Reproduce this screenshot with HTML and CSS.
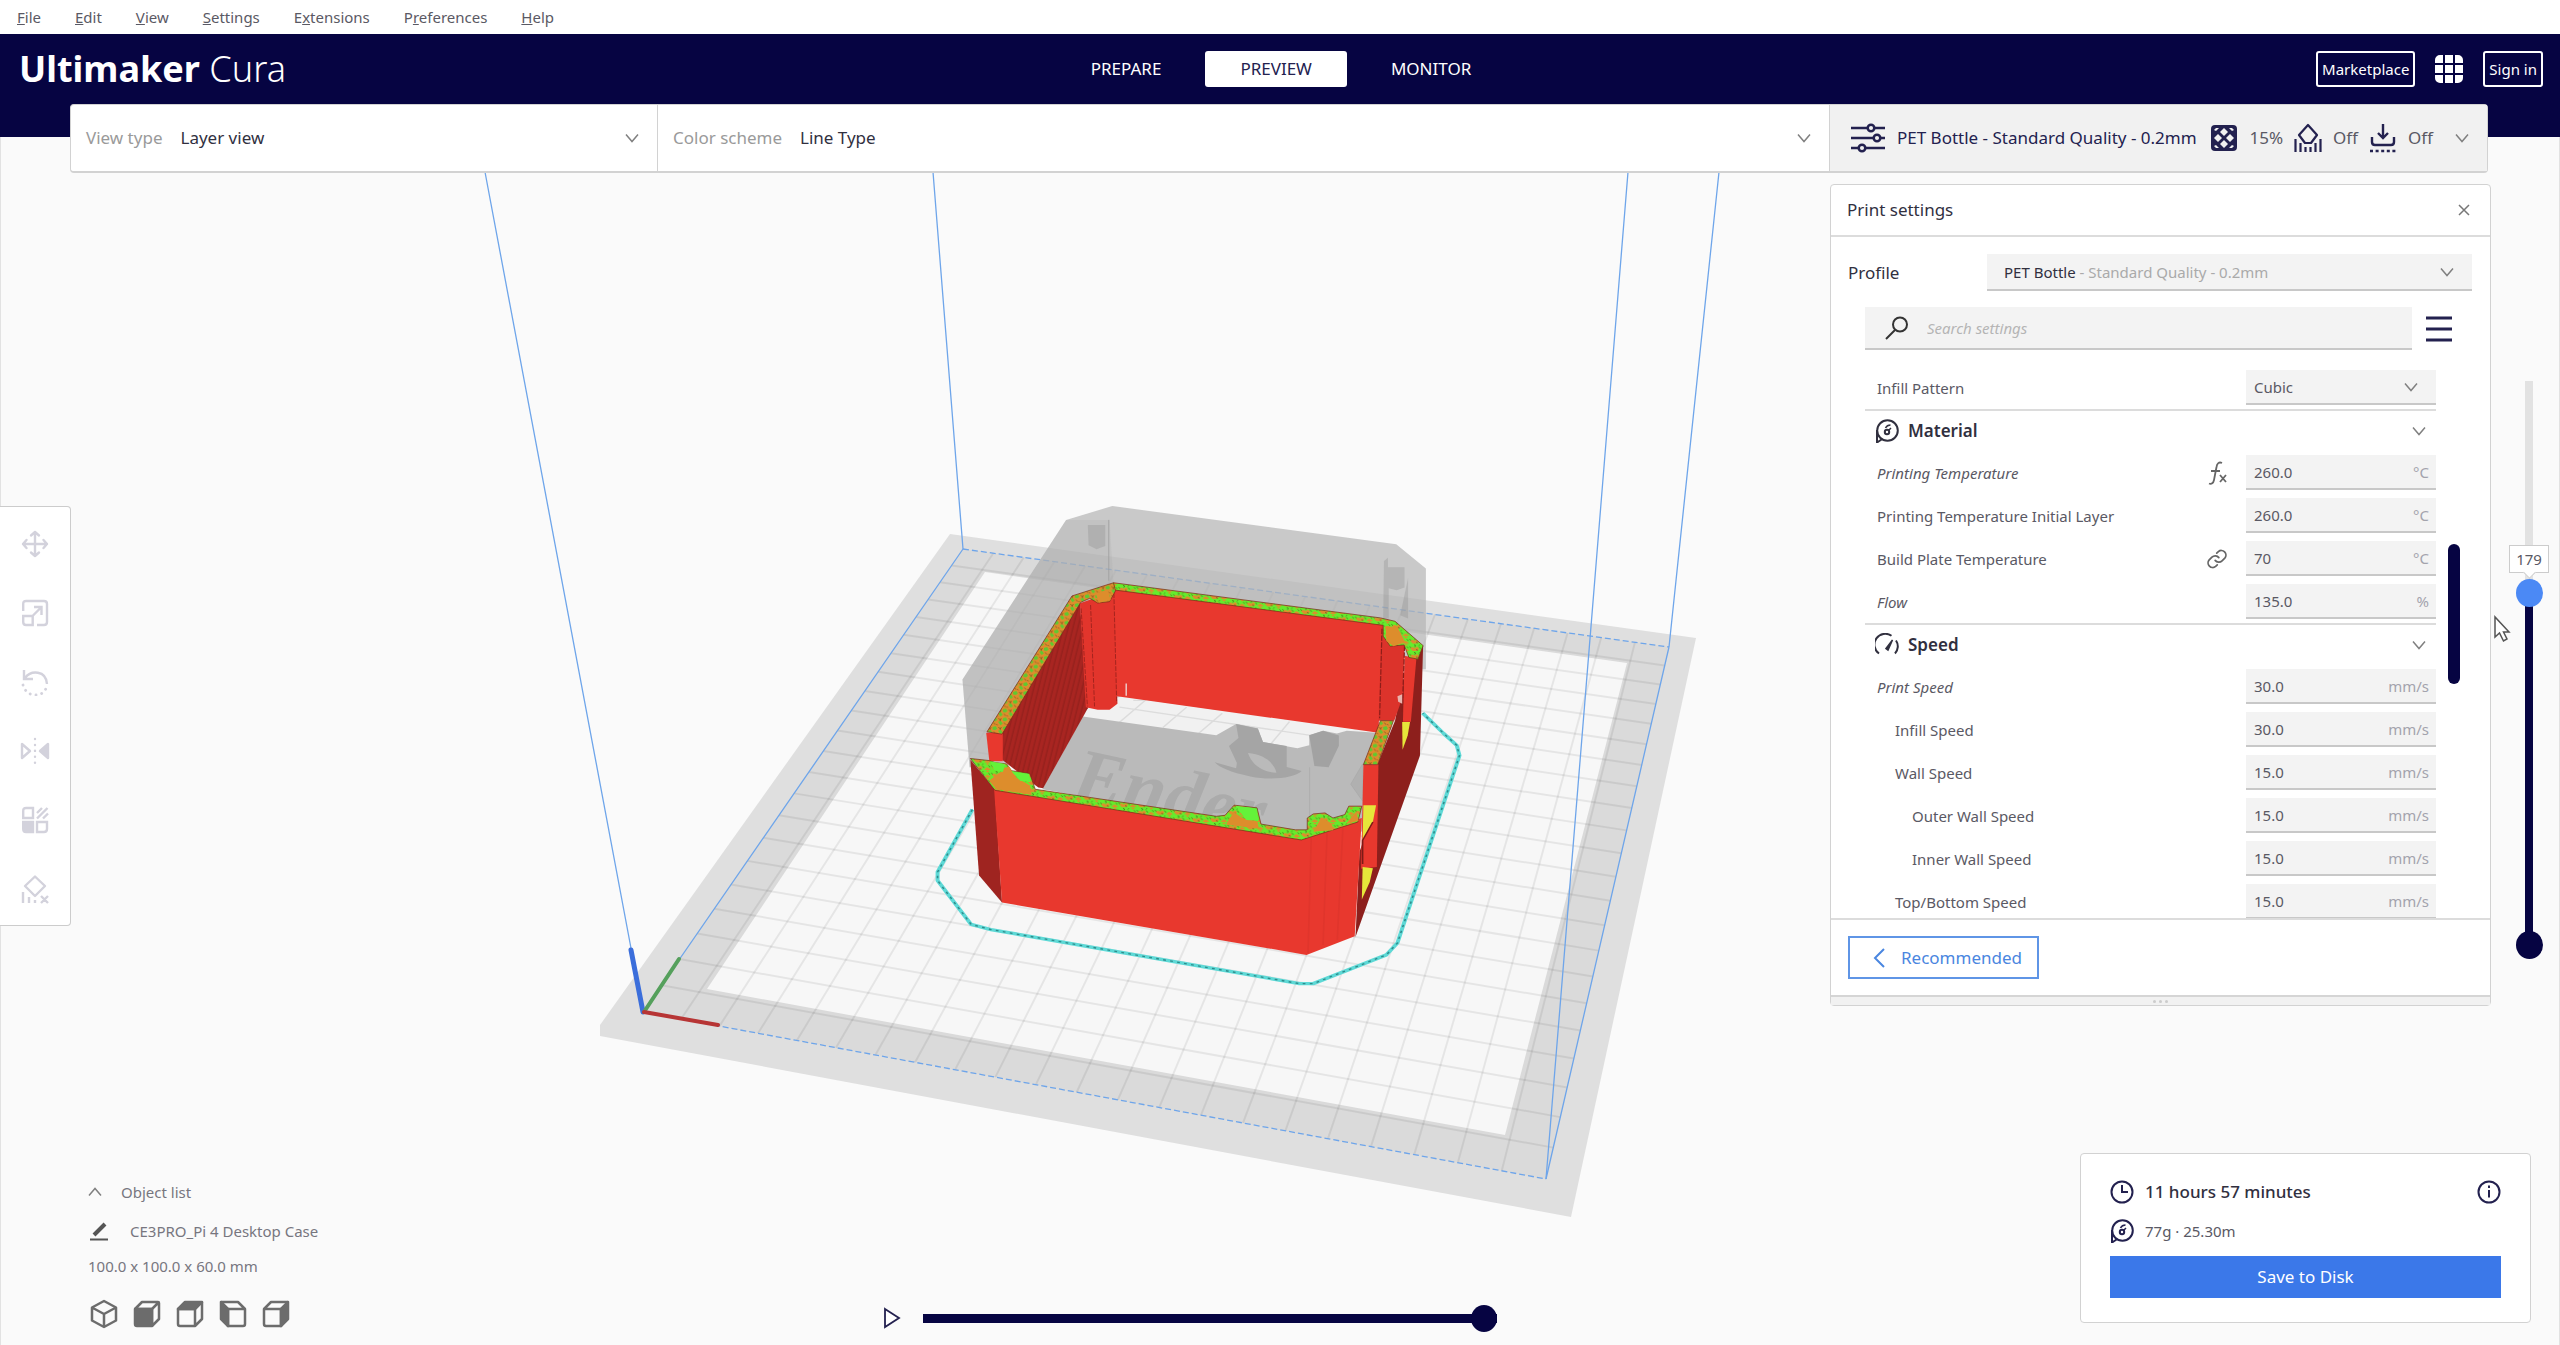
FILE: index.html
```html
<!DOCTYPE html>
<html lang="en">
<head>
    <meta charset="UTF-8">
    <meta name="viewport" content="width=device-width, initial-scale=1.0">
    <title>Ultimaker Cura</title>
    <link rel="stylesheet" href="styles.css">
</head>
<body>
    <!-- shared icons -->
    <svg class="defs" width="0" height="0">
        <symbol id="i-down" viewBox="0 0 14 14"><path d="M1 3.500l6 7 6-7" fill="none" stroke="currentColor" stroke-width="1.500"/></symbol>
        <symbol id="i-spool" viewBox="0 0 24 24">
            <g fill="none" stroke="currentColor">
                <circle cx="12.500" cy="11.500" r="10.300" stroke-width="2"/>
                <circle cx="12" cy="13" r="2.200" stroke-width="2"/>
                <path d="M2 11v12.500l4.500-3" stroke-width="2"/>
                <path d="M10.500 9q1.500-3 5-3M13.500 11.500l2.500-2.500" stroke-width="1.500"/>
            </g>
        </symbol>
    </svg>

    <nav class="menubar">
        <a href="#"><u>F</u>ile</a>
        <a href="#"><u>E</u>dit</a>
        <a href="#"><u>V</u>iew</a>
        <a href="#"><u>S</u>ettings</a>
        <a href="#">E<u>x</u>tensions</a>
        <a href="#">P<u>r</u>eferences</a>
        <a href="#"><u>H</u>elp</a>
    </nav>

    <header class="header">
        <div class="header-row">
            <div class="logo"><b>Ultimaker</b> <span>Cura</span></div>
            <div class="tabs">
                <button class="tab">PREPARE</button>
                <button class="tab active">PREVIEW</button>
                <button class="tab">MONITOR</button>
            </div>
            <div class="account">
                <button class="outline-btn">Marketplace</button>
                <button class="icon-btn" aria-label="Applications">
                    <svg width="28" height="28" viewBox="0 0 28 28" fill="#fff">
                        <path d="M5 0h3v8H0V5a5 5 0 0 1 5-5zM10 0h8v8h-8zM20 0h3a5 5 0 0 1 5 5v3h-8zM0 10h8v8H0zM10 10h8v8h-8zM20 10h8v8h-8zM0 20h8v8H5a5 5 0 0 1-5-5zM10 20h8v8h-8zM20 20h8v3a5 5 0 0 1-5 5h-3z"/>
                    </svg>
                </button>
                <button class="outline-btn">Sign in</button>
            </div>
        </div>
    </header>

    <main class="workspace">
        <svg class="scene" viewBox="0 137 2560 1208" preserveAspectRatio="xMidYMid slice">
            <defs>
                <pattern id="infill" width="46" height="22" patternUnits="userSpaceOnUse">
                    <rect width="46" height="22" fill="#64ec2c"/>
                    <path d="M2 14l7-4 5 4 6-5 5 7-4 5-12 1zM30 20l6-6 6 3 4 5H30zM33 4l5-3 4 4-5 2z" fill="#dd8d2c"/>
                    <path d="M1 8l3 5M12 3l5 4-4 2M25 10l4 6M27 3l-3 4M40 9l4 5M17 18l5 2" stroke="#4a6a1c" stroke-width="2" fill="none"/>
                </pattern>
                <pattern id="infill-dense" width="26" height="26" patternUnits="userSpaceOnUse">
                    <rect width="26" height="26" fill="#dd8d2c"/>
                    <path d="M0 3l8-3 4 7-5 5-7-2zM14 14l7-3 5 8-6 5z" fill="#5fc92f"/>
                    <path d="M3 16l4 6M15 4l5 4M22 3l-3 8M10 20l3 4" stroke="#75501c" stroke-width="2"/>
                </pattern>
                <pattern id="layers" width="12" height="30" patternUnits="userSpaceOnUse" patternTransform="rotate(12)">
                    <rect width="12" height="30" fill="#a92521"/>
                    <path d="M3 0v30" stroke="#97211d" stroke-width="4"/>
                </pattern>
            </defs>

            <!-- build plate, then the usable area -->
            <path d="M950 534L1696 638 1571 1217 600 1036V1025z" fill="#dfdfdf"/>
            <path d="M963 549L1669 647 1546 1179 643 1012z" fill="#dadada"/>
            <path d="M985 572L1627 663 1505 1135 707 989z" fill="#f7f7f7"/>
            <g id="grid" stroke="#000" stroke-opacity=".07" stroke-width="2"></g>

            <!-- build volume -->
            <g fill="none" stroke="#6ea5ea" stroke-width="1.300">
                <path d="M485 172L643 1012M933 172L963 549M1628 172L1546 1179M1719 172L1669 647"/>
                <path d="M643 1012L963 549M1669 647L1546 1179"/>
                <path d="M963 549L1669 647M643 1012L1546 1179" stroke-dasharray="6 3"/>
            </g>

            <!-- model -->
            <g transform="translate(900 480) scale(.3954 .338)">
                <path d="M420 118L537 77 1255 190 1330 262V560H1200L230 850H176L158 590z" fill="#b4b4b4" fill-opacity=".7"/>
                <path d="M420 118L158 590 176 850H230L540 310 530 118z" fill="#999" fill-opacity=".14"/>
                <path d="M475 133h44v62l-22 10-20-12zM1224 240l10-10v28h42v60l-20 8-20-6v90h-14z" fill="#888" fill-opacity=".3"/>
                <path d="M528 118v180" stroke="#999" stroke-width="2"/>
                <path d="M1265 400l20-110v120z" fill="#888" fill-opacity=".3"/>

                <!-- floor -->
                <path d="M465 680L560 640 1205 748 1170 1030 360 915z" fill="#f1f1f1"/>
                <path d="M555 672L1150 775M590 652l30 0-70 70M725 672l-60 60M815 690l-60 60M985 715l-50 70" stroke="#dcdcdc" stroke-width="4" fill="none"/>
                <path d="M462 700L800 755 850 722 905 735 918 775 1005 794 1035 785V755L1070 742 1105 750 1130 742 1205 748 1170 1040 1000 1045 360 915z" fill="#bababa"/>
                <path d="M850 722l55 13 13 40 60 12v62l38 12c-20 22-80 28-130 16-50-12-80-28-90-42l54 18 2-16-20-50 24-24z" fill="#a5a5a5"/>
                <path d="M880 808c40 4 66 28 72 58-34-2-62-22-72-58z" fill="#bababa"/>
                <path d="M1035 755l35-13 40 14v30l-26 64-36-4z" fill="#a2a2a2"/>
                <path d="M1036 850v150M1140 900l30-60v110z" stroke="#a8a8a8" stroke-width="2" fill="#b0b0b0"/>
            </g>
            <text class="emboss" transform="translate(1070 798) rotate(12)">Ender</text>
            <g transform="translate(900 480) scale(.3954 .338)">
                <!-- inner walls -->
                <path d="M535 320L1222 425 1210 748 540 638z" fill="#e8382e"/>
                <path d="M455 360L255 750V825L350 910 362 912 475 675z" fill="url(#layers)"/>
                <path d="M455 365L540 330 550 662 530 680 500 680 470 672z" fill="#e2352c"/>
                <path d="M458 380l16 290M482 370l10 300M541 335l7 325" stroke="#8d1d19" stroke-width="2" stroke-dasharray="14 4" fill="none"/>
                <path d="M572 602v36" stroke="#eee" stroke-width="3"/>
                <path d="M1285 520L1323 490 1315 815 1152 1352 1162 1100 1205 960 1208 840 1252 712z" fill="#8d1f1c"/>
                <path d="M1218 430L1276 485 1272 640 1250 712H1210z" fill="#dc332b"/>
                <path d="M1276 520L1306 528 1292 715H1272z" fill="#e8382e"/>
                <path d="M1219 440l-6 265M1276 490l-6 200" stroke="#8d1d19" stroke-width="3" stroke-dasharray="16 4" fill="none"/>
                <path d="M1258 640l12-6v28l-10-6z" fill="#e9b4ae"/>
                <path d="M1270 716h20l-6 40-13 42z" fill="#e6e63a"/>
                <path d="M1172 842H1210L1206 1145 1166 1150z" fill="#e8382e"/>
                <path d="M218 748H260V832H226z" fill="#e8382e"/>

                <!-- outer walls -->
                <path d="M178 828L240 915 258 1250 200 1170z" fill="#9f2420"/>
                <path d="M238 915L1015 1060 1168 1000 1150 1350 1028 1405 258 1250z" fill="#e8382e"/>
                <path d="M1040 1060l-8 340M1080 1045l-10 330M1120 1030l-14 330" stroke="#e0352c" stroke-width="4"/>
                <path d="M1172 962h32l-8 50-26 54z" fill="#e6e63a"/>
                <path d="M1170 1145l26 4-8 40-20 52z" fill="#e6e63a"/>
                <path d="M1196 1012l-26 54 0 70" stroke="#7d1a17" stroke-width="4" fill="none"/>

                <!-- current layer -->
                <g stroke="#7c2a18" stroke-width="2">
                    <path d="M540 304L1215 408 1252 418 1323 490 1310 530 1287 525 1275 488 1240 492 1222 462V430L540 325z" fill="url(#infill)"/>
                    <path d="M540 304L435 343 220 745 258 752 457 362 480 350 500 364 530 360 545 328z" fill="url(#infill-dense)"/>
                    <path d="M1215 712H1248L1208 842H1172z" fill="url(#infill-dense)"/>
                    <path d="M178 824L225 830 240 836 270 840 282 860 328 868 342 915 800 995 822 992 845 962 903 970 913 1018 1000 1035 1030 1035V1000L1045 988 1075 985 1095 1000 1125 990 1135 965 1168 965 1158 1012 1015 1065 240 918z" fill="url(#infill)"/>
                </g>
                <path d="M225 890l50-44 18 34 36 24 4 28-90-18zM826 1016l18-34 22 18 38 10 4 22-82-12zM1046 1040l20-42 26 18 4 20zM1128 1018l26-38 6 28z" fill="#dd8d2c"/>
                <path d="M1228 432l30 4 20 44-30 12-18-16z" fill="#dd8d2c"/>
                <path d="M495 335l30-10 8 30-30 8z" fill="#dd8d2c"/>
                <path d="M848 964l54 8 4 36-30-2zM282 862l44 8 4 24-26-4zM228 832l38 8-6 24-22-6z" fill="#64f23a"/>

                <!-- skirt -->
                <g fill="none" stroke-linejoin="round">
                    <path d="M183 975L95 1160V1185L180 1315 230 1330 1010 1490H1045L1230 1405 1258 1370 1415 815 1408 785 1375 750 1322 690" stroke="#5ed9d6" stroke-width="10"/>
                    <path d="M183 975L95 1160V1185L180 1315 230 1330 1010 1490H1045L1230 1405 1258 1370 1415 815 1408 785 1375 750 1322 690" stroke="#2f8c8c" stroke-width="4" stroke-dasharray="7 11"/>
                </g>
            </g>

            <!-- axes -->
            <g stroke-width="5" stroke-linecap="round">
                <path d="M643 1012L631 950" stroke="#3b6edb"/>
                <path d="M644 1012L679 959" stroke="#55a05c" stroke-width="4"/>
                <path d="M644 1012L718 1025" stroke="#b73535" stroke-width="4"/>
            </g>
        </svg>

        <section class="stage-bar">
            <div class="stage-select view-type">
                <label for="view-type">View type</label>
                <select id="view-type"><option>Layer view</option></select>
                <svg class="chev" width="14" height="14"><use href="#i-down"/></svg>
            </div>
            <div class="stage-select color-scheme">
                <label for="color-scheme">Color scheme</label>
                <select id="color-scheme"><option>Line Type</option></select>
                <svg class="chev" width="14" height="14"><use href="#i-down"/></svg>
            </div>
            <button class="print-setup">
                <svg width="36" height="30" viewBox="0 0 36 30" fill="none" stroke="currentColor" stroke-width="2.500">
                    <path d="M1 5h16M25 5h10M1 15h22M31 15h4M1 25h7M16 25h19"/>
                    <circle cx="21" cy="5" r="3.300"/><circle cx="27" cy="15" r="3.300"/><circle cx="12" cy="25" r="3.300"/>
                </svg>
                <span class="setup-name">PET Bottle - Standard Quality - 0.2mm</span>
                <svg width="28" height="28" viewBox="0 0 28 28">
                    <rect x="1" y="1" width="26" height="26" rx="4" fill="currentColor"/>
                    <path d="M14 4l4 4-4 4-4-4zM14 16l4 4-4 4-4-4zM8 10l4 4-4 4-4-4zM20 10l4 4-4 4-4-4zM6 4h3L6 7 4 6zM22 4h-3l3 3 2-1zM6 24h3l-3-3-2 1zM22 24h-3l3-3 2 1z" fill="#f1f1f1"/>
                </svg>
                <span class="setup-value">15%</span>
                <svg width="28" height="30" viewBox="0 0 28 30" fill="none" stroke="currentColor" stroke-width="2.200">
                    <path d="M14 2l9 10-6 8h-6l-6-8z" stroke-linejoin="round"/>
                    <path d="M1.500 16v13M6.500 20v9M11.500 24v5M16.500 24v5M21.500 20v9M26.500 16v13"/>
                </svg>
                <span class="setup-value">Off</span>
                <svg width="28" height="30" viewBox="0 0 28 30" fill="none" stroke="currentColor" stroke-width="2.400">
                    <path d="M14 1v14M9 10l5 5 5-5M3 14v5q0 3 3 3h16q3 0 3-3v-5"/>
                    <path d="M1 28h26" stroke-dasharray="3 2.600"/>
                </svg>
                <span class="setup-value">Off</span>
                <svg class="chev" width="14" height="14"><use href="#i-down"/></svg>
            </button>
        </section>

        <div class="canvas-main">
            <aside class="toolbar">
                <button aria-label="Move">
                    <svg width="28" height="28" viewBox="0 0 28 28" fill="none" stroke="currentColor" stroke-width="2.400" stroke-linecap="round" stroke-linejoin="round"><path d="M14 2v24M2 14h24M10 5.500L14 2l4 3.500M10 22.500l4 3.500 4-3.500M5.500 10L2 14l3.500 4M22.500 10l3.500 4-3.500 4"/></svg>
                </button>
                <button aria-label="Scale">
                    <svg width="28" height="28" viewBox="0 0 28 28" fill="none" stroke="currentColor" stroke-width="2.400"><path d="M2.200 12V5q0-3 3-3H23q3 0 3 3v18q0 3-3 3h-7M2.200 17h9.500v9H5q-2.800 0-2.800-3zM12 16.500L20 8.500M13 8h7.500v8"/></svg>
                </button>
                <button aria-label="Rotate">
                    <svg width="28" height="28" viewBox="0 0 28 28" fill="none" stroke="currentColor" stroke-width="2.400"><path d="M3 2v9h9M4 10C10 2 25 2 26 16"/><path d="M2 17q3 10 13 10 8 0 11-9" stroke-width="2.800" stroke-linecap="round" stroke-dasharray=".1 5.800"/></svg>
                </button>
                <button aria-label="Mirror">
                    <svg width="30" height="28" viewBox="0 0 30 28" fill="none" stroke="currentColor" stroke-width="2.400" stroke-linejoin="round"><path d="M2 7v14l8-7z"/><path d="M28 7v14l-8-7z" fill="currentColor"/><path d="M15 2v26" stroke-linecap="round" stroke-dasharray=".1 5.800"/></svg>
                </button>
                <button aria-label="Per model settings">
                    <svg width="28" height="28" viewBox="0 0 28 28" fill="none" stroke="currentColor" stroke-width="2.400"><path d="M2.200 12V5q0-3 3-3H12v10zM16 16h10v7q0 3-3 3h-7z"/><path d="M2.200 16H12v10H5q-2.800 0-2.800-3z" fill="currentColor"/><path d="M16 7l5-5M16 12.500L26.500 2M22 12.500l5-5"/></svg>
                </button>
                <button aria-label="Support blocker">
                    <svg width="28" height="30" viewBox="0 0 28 30" fill="none" stroke="currentColor" stroke-width="2.400"><path d="M14 2.500l10 9.500-10 10L4 12z" stroke-linejoin="round"/><path d="M2 18v11M8 23v6M14 26v3M20 22l7 7M27 22l-7 7"/></svg>
                </button>
            </aside>

            <section class="panel">
                <div class="panel-title">
                    <h2>Print settings</h2>
                    <button class="icon-btn" aria-label="Close">
                        <svg width="12" height="12" viewBox="0 0 12 12" stroke="#777" stroke-width="1.500"><path d="M1 1l10 10M11 1L1 11"/></svg>
                    </button>
                </div>

                <div class="profile-row">
                    <span id="profile-label">Profile</span>
                    <button class="profile-btn" aria-labelledby="profile-label">
                        <span>PET Bottle <em>- Standard Quality - 0.2mm</em></span>
                        <svg class="chev" width="14" height="14"><use href="#i-down"/></svg>
                    </button>
                </div>

                <div class="search-row">
                    <label class="search">
                        <svg width="24" height="24" viewBox="0 0 24 24" fill="none" stroke="#333" stroke-width="2"><circle cx="15" cy="8.500" r="7"/><path d="M10 14l-9 9"/></svg>
                        <input type="text" placeholder="Search settings" aria-label="Search settings">
                    </label>
                    <button class="icon-btn" aria-label="Setting visibility">
                        <svg width="28" height="26" viewBox="0 0 28 26" stroke="#23214f" stroke-width="3"><path d="M1 2h26M1 13h26M1 24h26"/></svg>
                    </button>
                </div>

                <div class="settings">
                    <div class="settings-list">
                        <div class="row">
                            <label for="infill-pattern">Infill Pattern</label>
                            <div class="field">
                                <select id="infill-pattern"><option>Cubic</option></select>
                                <svg class="chev" width="14" height="14"><use href="#i-down"/></svg>
                            </div>
                        </div>
                        <button class="category">
                            <svg width="24" height="24"><use href="#i-spool"/></svg>
                            <span>Material</span>
                            <svg class="chev" width="14" height="14"><use href="#i-down"/></svg>
                        </button>
                        <div class="row changed">
                            <label for="temp">Printing Temperature</label>
                            <svg class="row-icon" width="22" height="24" viewBox="0 0 22 24" fill="none" stroke="#666" stroke-width="1.800"><path d="M16 2c-3-1.500-5 .5-5.500 4L8 19c-.600 3-2.500 4.500-5 3.500M5 10h9M14 14l6 7M20 14l-6 7"/></svg>
                            <div class="field"><input id="temp" type="text" value="260.0"><span>°C</span></div>
                        </div>
                        <div class="row">
                            <label for="temp-initial">Printing Temperature Initial Layer</label>
                            <div class="field"><input id="temp-initial" type="text" value="260.0"><span>°C</span></div>
                        </div>
                        <div class="row">
                            <label for="plate-temp">Build Plate Temperature</label>
                            <svg class="row-icon" width="22" height="22" viewBox="0 0 24 24" fill="none" stroke="#666" stroke-width="1.900" stroke-linecap="round"><path d="M10 13.500a5 5 0 0 0 7.500.5l3-3a5 5 0 0 0-7-7.100l-1.800 1.700M14 10.500a5 5 0 0 0-7.500-.5l-3 3a5 5 0 0 0 7 7.100l1.800-1.700"/></svg>
                            <div class="field"><input id="plate-temp" type="text" value="70"><span>°C</span></div>
                        </div>
                        <div class="row changed">
                            <label for="flow">Flow</label>
                            <div class="field"><input id="flow" type="text" value="135.0"><span>%</span></div>
                        </div>
                        <button class="category">
                            <svg width="24" height="24" viewBox="0 0 24 24" fill="none" stroke="currentColor" stroke-width="2"><path d="M4 20.500A10.500 10.500 0 0 1 16.500 2.800M21 7.500a10.500 10.500 0 0 1-1 13"/><path d="M11 15.500L17.500 7l-4.500 10z" fill="currentColor" stroke-width="1.500"/></svg>
                            <span>Speed</span>
                            <svg class="chev" width="14" height="14"><use href="#i-down"/></svg>
                        </button>
                        <div class="row changed">
                            <label for="print-speed">Print Speed</label>
                            <div class="field"><input id="print-speed" type="text" value="30.0"><span>mm/s</span></div>
                        </div>
                        <div class="row child">
                            <label for="infill-speed">Infill Speed</label>
                            <div class="field"><input id="infill-speed" type="text" value="30.0"><span>mm/s</span></div>
                        </div>
                        <div class="row child">
                            <label for="wall-speed">Wall Speed</label>
                            <div class="field"><input id="wall-speed" type="text" value="15.0"><span>mm/s</span></div>
                        </div>
                        <div class="row grandchild">
                            <label for="outer-speed">Outer Wall Speed</label>
                            <div class="field"><input id="outer-speed" type="text" value="15.0"><span>mm/s</span></div>
                        </div>
                        <div class="row grandchild">
                            <label for="inner-speed">Inner Wall Speed</label>
                            <div class="field"><input id="inner-speed" type="text" value="15.0"><span>mm/s</span></div>
                        </div>
                        <div class="row child">
                            <label for="top-speed">Top/Bottom Speed</label>
                            <div class="field"><input id="top-speed" type="text" value="15.0"><span>mm/s</span></div>
                        </div>
                    </div>
                    <div class="scrollbar"><div class="scroll-thumb"></div></div>
                </div>

                <div class="panel-footer">
                    <button class="recommended">
                        <svg width="12" height="20" viewBox="0 0 12 20" fill="none" stroke="currentColor" stroke-width="2"><path d="M11 1L2 10l9 9"/></svg>
                        Recommended
                    </button>
                </div>
                <div class="resize-bar"><i></i><i></i><i></i></div>
            </section>

            <div class="layer-slider">
                <div class="layer-track">
                    <input class="layer-range upper" type="range" min="0" max="280" value="179" aria-label="Top layer">
                    <input class="layer-range lower" type="range" min="0" max="280" value="0" aria-label="Bottom layer">
                    <output class="layer-label">179</output>
                </div>
            </div>
            <svg class="cursor" width="18" height="28" viewBox="0 0 18 28"><path d="M2 2v20l4.500-4 4 8 3.500-2-3.500-7H16z" fill="#fff" stroke="#555" stroke-width="1.500"/></svg>
        </div>

        <footer class="canvas-footer">
            <div class="objects">
                <button class="objects-toggle">
                    <svg class="chev flip" width="14" height="14"><use href="#i-down"/></svg>
                    Object list
                </button>
                <div class="object-name">
                    <svg width="20" height="20" viewBox="0 0 20 20" stroke="#555"><path d="M5 14L16 3" stroke-width="4"/><path d="M1 18.500h18" stroke-width="2"/></svg>
                    <span>CE3PRO_Pi 4 Desktop Case</span>
                </div>
                <div class="object-size">100.0 x 100.0 x 60.0 mm</div>
                <div class="cameras">
                    <button aria-label="3D view"><svg width="28" height="30" viewBox="0 0 28 30"><path d="M14 2l12 6.500v13L14 28 2 21.500v-13zM2 8.500L14 15l12-6.500M14 15v13"/></svg></button>
                    <button aria-label="Front view"><svg width="28" height="30" viewBox="0 0 28 30"><path class="f" d="M2 10h17v17H4q-2 0-2-2z"/><path d="M2 10l7-7h16q1 0 1 1v16l-7 7M2 10h17v17M19 10l7-7"/></svg></button>
                    <button aria-label="Top view"><svg width="28" height="30" viewBox="0 0 28 30"><path class="f" d="M2 10l7-7h17l-7 7z"/><path d="M2 10h17v17H4q-2 0-2-2zM26 3v17l-7 7"/></svg></button>
                    <button aria-label="Left view"><svg width="28" height="30" viewBox="0 0 28 30"><path class="f" d="M9 10L2 3v17l7 7z"/><path d="M9 10h17v15q0 2-2 2H9zM2 3h17l7 7"/></svg></button>
                    <button aria-label="Right view"><svg width="28" height="30" viewBox="0 0 28 30"><path class="f" d="M19 10l7-7v17l-7 7z"/><path d="M2 10h17v17H4q-2 0-2-2zM2 10l7-7h17"/></svg></button>
                </div>
            </div>

            <div class="player">
                <button class="icon-btn" aria-label="Play">
                    <svg width="18" height="22" viewBox="0 0 18 22" fill="#fff" stroke="#23214f" stroke-width="1.800"><path d="M2 2l14 9-14 9z"/></svg>
                </button>
                <input class="path-range" type="range" min="0" max="100" value="100" aria-label="Path">
            </div>

            <section class="action-panel">
                <div class="action-row time">
                    <svg width="24" height="24" viewBox="0 0 24 24" fill="none" stroke="currentColor" stroke-width="2"><circle cx="12" cy="12" r="10.500"/><path d="M12 5v7h6"/></svg>
                    <span>11 hours 57 minutes</span>
                    <button class="icon-btn" aria-label="Info">
                        <svg width="24" height="24" viewBox="0 0 24 24" fill="none" stroke="#23214f" stroke-width="2"><circle cx="12" cy="12" r="10.500"/><path d="M12 10v7.500M12 5.500v2.500"/></svg>
                    </button>
                </div>
                <div class="action-row">
                    <svg width="24" height="24"><use href="#i-spool"/></svg>
                    <span>77g · 25.30m</span>
                </div>
                <button class="save-btn">Save to Disk</button>
            </section>
        </footer>
    </main>

    <script src="script.js"></script>
</body>
</html>
```

FILE: styles.css
```css
:root {
    --navy: #060442;
    --icon: #23214f;
    --text: #31303f;
    --text-soft: #5a5964;
    --muted: #9a9a9a;
    --line: #d2d2d2;
    --field: #f3f3f3;
    --blue: #3b78e9;
}

* {
    box-sizing: border-box;
    margin: 0;
    padding: 0;
}

body {
    display: flex;
    flex-direction: column;
    min-height: 100vh;
    font-family: "Noto Sans", "Open Sans", sans-serif;
    font-size: 15px;
    line-height: 20px;
    color: var(--text);
    background: #fafafa;
    overflow: hidden;
}

button,
input,
select {
    font: inherit;
    color: inherit;
    border: none;
    background: none;
    outline: none;
}

button {
    cursor: pointer;
}

select {
    appearance: none;
}

svg {
    display: block;
    flex: none;
}

.defs {
    position: absolute;
}

.chev {
    color: #808080;
}

.flip {
    transform: scaleY(-1);
}

.icon-btn {
    display: flex;
}

/* menu */
.menubar {
    display: flex;
    align-items: center;
    gap: 34px;
    height: 34px;
    padding: 0 17px;
    background: #fff;
}

.menubar a {
    color: var(--text-soft);
    text-decoration: none;
}

/* header */
.header {
    height: 103px;
    background: var(--navy);
}

.header-row {
    display: grid;
    grid-template-columns: 1fr auto 1fr;
    align-items: center;
    height: 70px;
    padding: 0 17px 0 19px;
}

.logo {
    font-size: 36px;
    line-height: 40px;
    font-weight: 300;
    color: #fff;
}

.logo b {
    font-weight: 700;
}

.tabs {
    display: flex;
    gap: 9px;
}

.tab {
    height: 36px;
    padding: 0 35px;
    font-size: 17px;
    color: #fff;
    border-radius: 3px;
}

.tab.active {
    color: var(--icon);
    background: #fff;
}

.account {
    display: flex;
    align-items: center;
    justify-content: flex-end;
    gap: 20px;
}

.outline-btn {
    height: 36px;
    padding: 0 4px;
    color: #fff;
    border: 2px solid #fff;
    border-radius: 3px;
}

/* workspace */
.workspace {
    position: relative;
    display: flex;
    flex-direction: column;
    flex: 1;
    border: 1px solid #e2e2e2;
    border-width: 0 1px;
}

.scene {
    position: absolute;
    inset: 0;
    width: 100%;
    height: 100%;
}

.emboss {
    font: italic bold 76px "Liberation Serif", serif;
    fill: #ababab;
}

.stage-bar {
    position: relative;
    display: flex;
    height: 69px;
    margin: -33px 71px 0 69px;
    background: #fff;
    border: 1px solid var(--line);
    border-bottom-width: 2px;
    border-radius: 4px;
    font-size: 17px;
}

.stage-select {
    display: flex;
    align-items: center;
    gap: 18px;
    padding: 0 18px 0 15px;
    border-right: 1px solid var(--line);
}

.stage-select label {
    color: var(--muted);
}

.stage-select select {
    flex: 1;
}

.view-type {
    width: 587px;
}

.color-scheme {
    flex: 1;
}

.print-setup {
    display: flex;
    align-items: center;
    width: 657px;
    padding: 0 18px 0 20px;
    color: var(--icon);
    background: #f1f1f1;
}

.setup-name {
    margin: 0 auto 0 11px;
}

.setup-value {
    margin: 0 11px;
    color: var(--text-soft);
}

.print-setup .chev {
    margin-left: 11px;
}

.canvas-main {
    position: relative;
    display: flex;
    align-items: flex-start;
    flex: 1;
}

.toolbar {
    display: flex;
    flex-direction: column;
    width: 71px;
    margin: 333px auto 0 -1px;
    padding: 2px 0;
    background: #fff;
    border: 1px solid #ccc;
    border-left: none;
    border-radius: 0 4px 4px 0;
}

.toolbar button {
    display: flex;
    align-items: center;
    justify-content: center;
    height: 69px;
    color: #d3d2dc;
}

/* print settings */
.panel {
    width: 661px;
    margin-top: 11px;
    background: #fff;
    border: 1px solid var(--line);
    border-radius: 4px;
}

.panel-title {
    display: flex;
    align-items: center;
    justify-content: space-between;
    height: 52px;
    padding: 0 20px 0 16px;
    border-bottom: 2px solid #dcdcdc;
}

.panel-title h2 {
    font-size: 17px;
    font-weight: 400;
}

.profile-row {
    display: flex;
    align-items: center;
    justify-content: space-between;
    padding: 17px 18px 0 17px;
    font-size: 17px;
}

.profile-btn {
    display: flex;
    align-items: center;
    justify-content: space-between;
    width: 485px;
    height: 37px;
    padding: 0 18px 0 17px;
    font-size: 15px;
    background: var(--field);
    border-bottom: 2px solid #c8c8c8;
}

.profile-btn em {
    font-style: normal;
    color: #aaa;
}

.search-row {
    display: flex;
    align-items: center;
    gap: 13px;
    margin: 16px 37px 0 34px;
}

.search {
    display: flex;
    align-items: center;
    gap: 18px;
    flex: 1;
    height: 43px;
    padding: 0 20px;
    background: var(--field);
    border-bottom: 2px solid #c8c8c8;
}

.search input {
    flex: 1;
    font-style: italic;
}

.search input::placeholder {
    color: #b5b5b5;
}

.settings {
    display: flex;
    gap: 12px;
    max-height: 552px;
    margin-top: 16px;
    padding: 0 30px 0 34px;
    overflow: hidden;
}

.settings-list {
    flex: 1;
}

.row {
    display: flex;
    align-items: center;
    height: 43px;
    padding-left: 12px;
    color: var(--text-soft);
}

.row label {
    flex: 1;
}

.child {
    padding-left: 30px;
}

.grandchild {
    padding-left: 47px;
}

.changed label {
    font-style: italic;
}

.row-icon {
    margin-right: 18px;
}

.field {
    display: flex;
    align-items: center;
    width: 190px;
    height: 35px;
    padding: 0 7px 0 8px;
    background: var(--field);
    border-bottom: 2px solid #c8c8c8;
}

.field input,
.field select {
    flex: 1;
    min-width: 0;
}

.field span {
    color: #a3a3ad;
}

.field .chev {
    margin-right: 11px;
}

.category {
    display: flex;
    align-items: center;
    gap: 9px;
    width: 100%;
    height: 42px;
    padding: 0 10px;
    font-size: 17px;
    font-weight: 600;
    border-top: 2px solid #dcdcdc;
}

.category span {
    flex: 1;
    text-align: left;
}

.scrollbar {
    width: 12px;
}

.scroll-thumb {
    height: 140px;
    margin-top: 178px;
    background: var(--navy);
    border-radius: 6px;
}

.panel-footer {
    padding: 16px 17px;
    border-top: 2px solid #dcdcdc;
}

.recommended {
    display: flex;
    align-items: center;
    gap: 16px;
    height: 43px;
    padding: 0 15px 0 23px;
    font-size: 17px;
    color: #4a86e0;
    border: 2px solid #5f95e6;
}

.resize-bar {
    display: flex;
    align-items: center;
    justify-content: center;
    gap: 3px;
    height: 10px;
    background: #f1f1f1;
    border-top: 2px solid #d5d5d5;
}

.resize-bar i {
    width: 3px;
    height: 3px;
    background: #ccc;
    border-radius: 50%;
}

/* layer slider */
.layer-slider {
    width: 68px;
    padding: 208px 0 0 24px;
}

.layer-track {
    position: relative;
    display: grid;
    justify-content: center;
    width: 28px;
    height: 578px;
    background: linear-gradient(#e2e2e2 37%, var(--navy) 37%) top / 8px 97% no-repeat;
}

.layer-range {
    grid-area: 1 / 1;
    width: 28px;
    height: 578px;
    appearance: none;
    writing-mode: vertical-lr;
    direction: rtl;
    pointer-events: none;
}

.layer-range::-webkit-slider-thumb {
    appearance: none;
    width: 27px;
    height: 28px;
    background: var(--navy);
    border-radius: 50%;
    pointer-events: auto;
}

.upper::-webkit-slider-thumb {
    background: #4b89f5;
}

.layer-label {
    position: absolute;
    top: 164px;
    left: -6px;
    width: 40px;
    height: 28px;
    line-height: 26px;
    text-align: center;
    color: var(--text-soft);
    background: #fff;
    border: 1px solid #ccc;
}

.layer-label::after {
    content: "";
    position: absolute;
    bottom: -5px;
    left: 15px;
    width: 8px;
    height: 8px;
    background: #fff;
    border: 1px solid #ccc;
    border-width: 0 1px 1px 0;
    transform: rotate(45deg);
}

.cursor {
    position: absolute;
    top: 442px;
    right: 48px;
}

/* bottom area */
.canvas-footer {
    position: relative;
    display: flex;
    align-items: flex-end;
    padding: 0 28px 13px 87px;
}

.objects {
    display: flex;
    flex-direction: column;
    margin-bottom: 3px;
    color: #77767f;
}

.objects-toggle {
    display: flex;
    align-items: center;
    gap: 19px;
    height: 40px;
}

.object-name {
    display: flex;
    align-items: center;
    gap: 21px;
    height: 38px;
    padding-left: 1px;
}

.object-size {
    height: 49px;
    line-height: 32px;
}

.cameras {
    display: flex;
    gap: 15px;
    padding-left: 2px;
}

.cameras path {
    fill: none;
    stroke: #6c6c6c;
    stroke-width: 2.5px;
    stroke-linejoin: round;
}

.cameras .f {
    fill: #6c6c6c;
}

.player {
    display: flex;
    align-items: center;
    gap: 22px;
    width: 614px;
    height: 28px;
    margin: 0 583px 0 auto;
}

.path-range {
    flex: 1;
    height: 28px;
    appearance: none;
    background: linear-gradient(var(--navy), var(--navy)) center / 100% 9px no-repeat;
}

.path-range::-webkit-slider-thumb {
    appearance: none;
    width: 26px;
    height: 27px;
    background: var(--navy);
    border-radius: 50%;
}

.action-panel {
    width: 451px;
    margin-bottom: 9px;
    padding: 18px 29px 24px;
    background: #fff;
    border: 1px solid var(--line);
    border-radius: 4px;
}

.action-row {
    display: flex;
    align-items: center;
    gap: 11px;
    height: 39px;
    color: var(--icon);
}

.action-row span {
    flex: 1;
    color: var(--text-soft);
}

.time {
    font-size: 17px;
    font-weight: 500;
}

.time span {
    color: var(--text);
}

.save-btn {
    width: 100%;
    height: 42px;
    margin-top: 6px;
    font-size: 17px;
    color: #fff;
    background: var(--blue);
}
```

FILE: script.js
```js
// corners of the printable area on screen
const plate = {
    fl: [643, 1012],
    fr: [1546, 1179],
    br: [1669, 647],
    bl: [963, 549]
};
const CELLS = 22;

// perspective mapping from the unit square to the plate
function project(u, v) {
    const [x0, y0] = plate.fl;
    const [x1, y1] = plate.fr;
    const [x2, y2] = plate.br;
    const [x3, y3] = plate.bl;
    const dx1 = x1 - x2, dx2 = x3 - x2, sx = x0 - x1 + x2 - x3;
    const dy1 = y1 - y2, dy2 = y3 - y2, sy = y0 - y1 + y2 - y3;
    const det = dx1 * dy2 - dx2 * dy1;
    const g = (sx * dy2 - dx2 * sy) / det;
    const h = (dx1 * sy - sx * dy1) / det;
    const w = g * u + h * v + 1;
    return [
        ((x1 - x0 + g * x1) * u + (x3 - x0 + h * x3) * v + x0) / w,
        ((y1 - y0 + g * y1) * u + (y3 - y0 + h * y3) * v + y0) / w
    ];
}

function addLine(from, to) {
    const line = document.createElementNS('http://www.w3.org/2000/svg', 'path');
    line.setAttribute('d', `M${from.join(' ')}L${to.join(' ')}`);
    document.getElementById('grid').appendChild(line);
}

for (let i = 1; i < CELLS; i++) {
    const t = i / CELLS;
    addLine(project(t, 0), project(t, 1));
    addLine(project(0, t), project(1, t));
}
```
